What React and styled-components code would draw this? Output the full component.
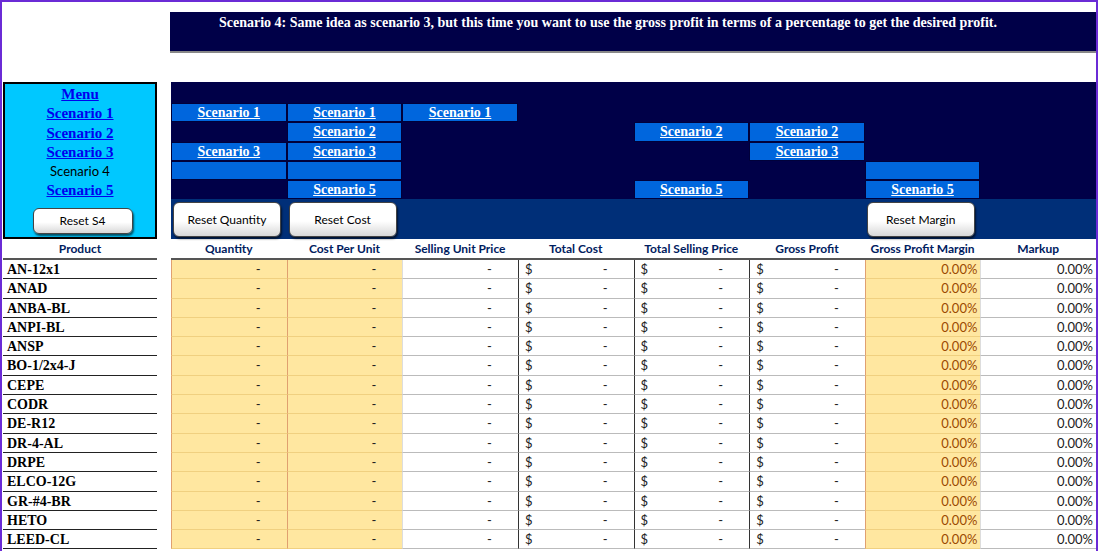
import React from "react";
import styled, { createGlobalStyle } from "styled-components";

const Global = createGlobalStyle`
  html, body { margin: 0; padding: 0; background: #fff; }
`;

const Page = styled.div`
  width: 1098px; height: 551px; box-sizing: border-box; overflow: hidden;
  border: 2px solid #6b2bd6; border-bottom: none; background: #fff;
  font-family: "Liberation Sans", Arial, sans-serif;
`;
const TitleRow = styled.div`padding: 10px 0 0 168px; height: 80px; box-sizing: border-box;`;
const Title = styled.div`
  height: 41px; background: #000048; border-bottom: 2px solid #888; box-sizing: border-box;
  color: #fff; font-family: "Liberation Serif", serif; font-weight: bold; font-size: 14px;
  text-align: center; padding: 3px 50px 0 0;
`;
const Middle = styled.div`display: flex; height: 157px; gap: 14px;`;
const Menu = styled.div`
  width: 154px; margin-left: 1px; box-sizing: border-box; background: #00c8ff; border: 2px solid #000;
  display: flex; flex-direction: column; align-items: center; padding-top: 1px;
`;
const MenuLink = styled.div`
  height: 19.3px; line-height: 19px; font-family: "Liberation Serif", serif; font-size: 15px;
  font-weight: ${p => (p.$plain ? "normal" : "bold")};
  color: ${p => (p.$plain ? "#000" : "#0000ee")};
  text-decoration: ${p => (p.$plain ? "none" : "underline")};
  ${p => p.$plain && `font-family: "Lato", sans-serif; font-size: 13px;`}
`;
const Panel = styled.div`
  flex: 1; background: #000048; display: grid;
  grid-template-columns: repeat(8, 1fr); grid-template-rows: 21px repeat(5, 19.3px) 1fr;
`;
const Cell = styled.div`
  grid-column: ${p => p.$c}; grid-row: ${p => p.$r + 1};
  background: #0066dd; border: 1px solid #00003a; box-sizing: border-box;
  color: #fff; font-family: "Liberation Serif", serif; font-weight: bold; font-size: 14px;
  text-decoration: underline; text-align: center; line-height: 17px;
`;
const Strip = styled.div`
  grid-column: 1 / -1; grid-row: 7; background: #002f78;
  display: grid; grid-template-columns: repeat(8, 1fr); align-items: center;
`;
const Btn = styled.div`
  grid-column: ${p => p.$c}; justify-self: ${p => p.$j || "start"};
  margin-left: ${p => p.$ml || 2}px;
  width: 108px; height: 35px; border-radius: 6px; box-sizing: border-box;
  background: linear-gradient(#fff 55%, #d8d8d8); border: 1px solid #444;
  box-shadow: 1px 2px 2px rgba(0,0,0,.6);
  display: flex; align-items: center; justify-content: center;
  font-family: "Lato", sans-serif; font-size: 12px; color: #000;
`;
const Table = styled.div`
  display: grid; grid-template-columns: 154px 14px repeat(8, 1fr); margin-left: 1px;
  font-family: "Lato", sans-serif; font-size: 12px;
`;
const Head = styled.div`
  height: 19px; line-height: 19px; text-align: center; font-weight: bold; color: #002060;
  border-bottom: ${p => (p.$gap ? "none" : "2px solid #555")};
`;
const Prod = styled.div`
  height: 19.3px; line-height: 19px; border-bottom: 1px solid #222; box-sizing: border-box;
  font-family: "Liberation Serif", serif; font-weight: bold; font-size: 14px; padding-left: 4px;
`;
const Gap = styled.div``;
const Val = styled.div`
  height: 19.3px; box-sizing: border-box; line-height: 19px; padding: 0 ${p => p.$pct ? 3 : 26}px 0 6px;
  display: flex; justify-content: ${p => (p.$cur ? "space-between" : "flex-end")};
  background: ${p => (p.$y ? "#ffe7a0" : "#fff")};
  border-bottom: 1px solid ${p => (p.$y ? "#f0d080" : "#bbb")};
  border-left: 1px solid ${p => (p.$y ? "#e0a070" : p.$cur ? "#333" : "#ddd")};
  color: ${p => (p.$pct && p.$y ? "#9c4a00" : "#222")};
  font-size: 13px;
`;

const cells = [
  [1, 1, "Scenario 1"], [2, 1, "Scenario 1"], [3, 1, "Scenario 1"],
  [2, 2, "Scenario 2"], [5, 2, "Scenario 2"], [6, 2, "Scenario 2"],
  [1, 3, "Scenario 3"], [2, 3, "Scenario 3"], [6, 3, "Scenario 3"],
  [1, 4, ""], [2, 4, ""], [7, 4, ""],
  [2, 5, "Scenario 5"], [5, 5, "Scenario 5"], [7, 5, "Scenario 5"],
];
const heads = ["Quantity", "Cost Per Unit", "Selling Unit Price", "Total Cost", "Total Selling Price", "Gross Profit", "Gross Profit Margin", "Markup"];
const products = ["AN-12x1", "ANAD", "ANBA-BL", "ANPI-BL", "ANSP", "BO-1/2x4-J", "CEPE", "CODR", "DE-R12", "DR-4-AL", "DRPE", "ELCO-12G", "GR-#4-BR", "HETO", "LEED-CL"];

export default function App() {
  return (
    <Page>
      <Global />
      <TitleRow>
        <Title>Scenario 4: Same idea as scenario 3, but this time you want to use the gross profit in terms of a percentage to get the desired profit.</Title>
      </TitleRow>
      <Middle>
        <Menu>
          <MenuLink>Menu</MenuLink>
          <MenuLink>Scenario 1</MenuLink>
          <MenuLink>Scenario 2</MenuLink>
          <MenuLink>Scenario 3</MenuLink>
          <MenuLink $plain>Scenario 4</MenuLink>
          <MenuLink>Scenario 5</MenuLink>
          <Btn $j="start" $ml={5} style={{ marginTop: 7, width: 100, height: 26 }}>Reset S4</Btn>
        </Menu>
        <Panel>
          {cells.map(([c, r, t], i) => <Cell key={i} $c={c} $r={r}>{t}</Cell>)}
          <Strip>
            <Btn $c={1}>Reset Quantity</Btn>
            <Btn $c={2}>Reset Cost</Btn>
            <Btn $c={7}>Reset Margin</Btn>
          </Strip>
        </Panel>
      </Middle>
      <Table>
        <Head>Product</Head><Head $gap />
        {heads.map(h => <Head key={h}>{h}</Head>)}
        {products.map(p => (
          <React.Fragment key={p}>
            <Prod>{p}</Prod><Gap />
            <Val $y>-</Val><Val $y>-</Val><Val>-</Val>
            <Val $cur><span>$</span><span>-</span></Val>
            <Val $cur><span>$</span><span>-</span></Val>
            <Val $cur><span>$</span><span>-</span></Val>
            <Val $y $pct>0.00%</Val><Val $pct>0.00%</Val>
          </React.Fragment>
        ))}
      </Table>
    </Page>
  );
}
